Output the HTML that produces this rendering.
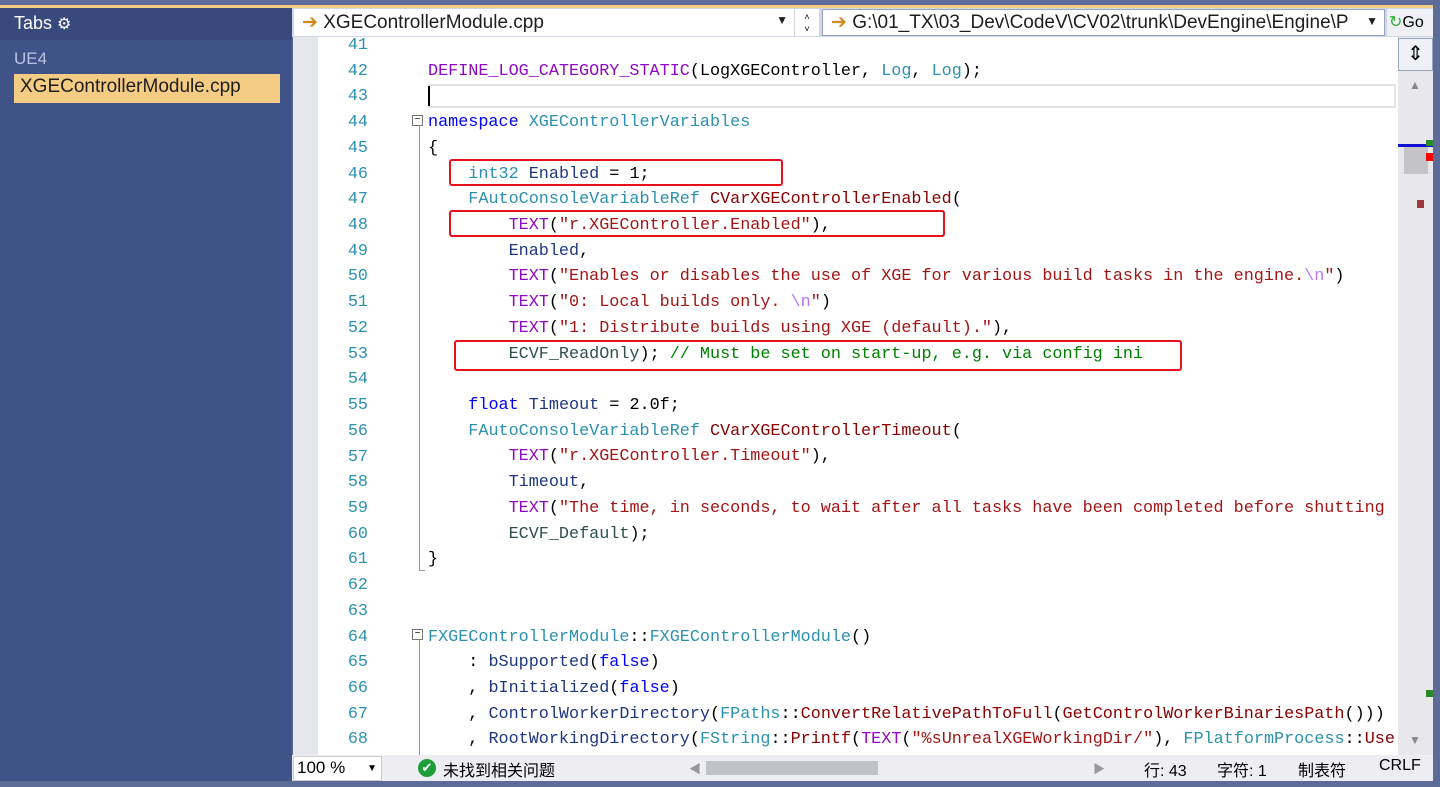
<!DOCTYPE html>
<html><head><meta charset="utf-8"><style>
*{margin:0;padding:0;box-sizing:border-box}
body{width:1440px;height:787px;overflow:hidden;background:#5d6b99;position:relative;font-family:"Liberation Sans","Noto Sans CJK SC",sans-serif}
.abs{position:absolute}
#side{left:0;top:8px;width:292px;height:773px;background:#3f5389}
#sidehead{left:0;top:8px;width:292px;height:32px;background:#384a7d;color:#fff;font-size:18px;padding:5px 14px}
#code{left:293px;top:37px;width:1105px;height:718px;background:#fff;overflow:hidden}
#gutter{left:0;top:0;width:25px;height:718px;background:#e6e7ed}
pre{position:absolute;left:0;top:-4px;font-family:"Liberation Mono",monospace;font-size:16.8px;line-height:25.72px;color:#000;white-space:pre}
.ln{color:#2b91af;text-align:right;width:75px}
.m{color:#8f08c4}.s{color:#a31515}.t{color:#2b91af}.v{color:#1f377f}.k{color:#0000ff}.g{color:#880000}.e{color:#2f4f4f}.c{color:#008000}.esc{color:#b776fb}
.box{position:absolute;border:2px solid #e8101a;border-radius:3px}
</style></head><body>
<div class="abs" style="left:0;top:0;width:1440px;height:5px;background:#5d6b99"></div>
<div class="abs" style="left:0;top:5px;width:1433px;height:3px;background:#f5cc84"></div>
<div class="abs" id="side"></div>
<div class="abs" id="sidehead">Tabs <span style="font-size:16px">⚙</span></div>
<div class="abs" style="left:14px;top:49px;color:#b8c3e0;font-size:17px">UE4</div>
<div class="abs" style="left:14px;top:74px;width:266px;height:29px;background:#f5cc84;color:#1e1e1e;font-size:19px;padding:2px 6px">XGEControllerModule.cpp</div>
<div class="abs" style="left:292px;top:8px;width:1141px;height:29px;background:#cfd6e5"></div>
<div class="abs" style="left:294px;top:9px;width:500px;height:27px;background:#fff;font-size:19px;padding:2px 8px;color:#1e1e1e"><span style="color:#d08a20">➔</span> XGEControllerModule.cpp<span style="position:absolute;right:6px;top:4px;font-size:12px">▼</span></div>
<div class="abs" style="left:795px;top:9px;width:24px;height:27px;background:#fff;font-size:9px;text-align:center;line-height:12px;padding-top:2px">˄<br>˅</div>
<div class="abs" style="left:822px;top:9px;width:563px;height:27px;background:#fff;border:1px solid #9aa4c0;font-size:19px;padding:1px 8px;color:#1e1e1e;white-space:nowrap;overflow:hidden"><span style="color:#d08a20">➔</span> G:\01_TX\03_Dev\CodeV\CV02\trunk\DevEngine\Engine\P<span style="position:absolute;right:6px;top:4px;font-size:12px">▼</span></div>
<div class="abs" style="left:1387px;top:9px;width:46px;height:27px;background:#eef0f6;font-size:16px;padding:3px 2px"><span style="color:#3a3">↻</span>Go</div>
<div class="abs" id="code">
<div class="abs" id="gutter"></div>
<div class="abs" style="left:135px;top:47px;width:968px;height:24px;border:2px solid #e4e4e4"></div>
<div class="abs" style="left:135px;top:49px;width:2px;height:20px;background:#000"></div>
<pre class="ln" style="left:0">41
42
43
44
45
46
47
48
49
50
51
52
53
54
55
56
57
58
59
60
61
62
63
64
65
66
67
68</pre>
<div class="abs" style="left:119px;top:78px;width:11px;height:11px;border:1px solid #777;font-size:10px;line-height:8px;text-align:center">−</div>
<div class="abs" style="left:126px;top:89px;width:1px;height:445px;background:#999"></div>
<div class="abs" style="left:126px;top:533px;width:6px;height:1px;background:#999"></div>
<div class="abs" style="left:119px;top:592px;width:11px;height:11px;border:1px solid #777;font-size:10px;line-height:8px;text-align:center">−</div>
<div class="abs" style="left:126px;top:603px;width:1px;height:120px;background:#999"></div>
<pre style="left:135px;top:21.7px"><span class="m">DEFINE_LOG_CATEGORY_STATIC</span>(LogXGEController, <span class="t">Log</span>, <span class="t">Log</span>);

<span class="k">namespace</span> <span class="t">XGEControllerVariables</span>
{
    <span class="t">int32</span> <span class="v">Enabled</span> = 1;
    <span class="t">FAutoConsoleVariableRef</span> <span class="g">CVarXGEControllerEnabled</span>(
        <span class="m">TEXT</span>(<span class="s">"r.XGEController.Enabled"</span>),
        <span class="v">Enabled</span>,
        <span class="m">TEXT</span>(<span class="s">"Enables or disables the use of XGE for various build tasks in the engine.</span><span class="esc">\n</span><span class="s">"</span>)
        <span class="m">TEXT</span>(<span class="s">"0: Local builds only. </span><span class="esc">\n</span><span class="s">"</span>)
        <span class="m">TEXT</span>(<span class="s">"1: Distribute builds using XGE (default)."</span>),
        <span class="e">ECVF_ReadOnly</span>); <span class="c">// Must be set on start-up, e.g. via config ini</span>

    <span class="k">float</span> <span class="v">Timeout</span> = 2.0f;
    <span class="t">FAutoConsoleVariableRef</span> <span class="g">CVarXGEControllerTimeout</span>(
        <span class="m">TEXT</span>(<span class="s">"r.XGEController.Timeout"</span>),
        <span class="v">Timeout</span>,
        <span class="m">TEXT</span>(<span class="s">"The time, in seconds, to wait after all tasks have been completed before shutting</span>
        <span class="e">ECVF_Default</span>);
}


<span class="t">FXGEControllerModule</span>::<span class="t">FXGEControllerModule</span>()
    : <span class="v">bSupported</span>(<span class="k">false</span>)
    , <span class="v">bInitialized</span>(<span class="k">false</span>)
    , <span class="v">ControlWorkerDirectory</span>(<span class="t">FPaths</span>::<span class="g">ConvertRelativePathToFull</span>(<span class="g">GetControlWorkerBinariesPath</span>()))
    , <span class="v">RootWorkingDirectory</span>(<span class="t">FString</span>::<span class="g">Printf</span>(<span class="m">TEXT</span>(<span class="s">"%sUnrealXGEWorkingDir/"</span>), <span class="t">FPlatformProcess</span>::<span class="g">Use</span></pre>
</div>
<div class="box" style="left:449px;top:159px;width:334px;height:27px"></div>
<div class="box" style="left:449px;top:210px;width:496px;height:27px"></div>
<div class="box" style="left:454px;top:340px;width:728px;height:31px"></div>
<div class="abs" style="left:1398px;top:37px;width:35px;height:718px;background:#e8e8ec"></div>
<div class="abs" style="left:1398px;top:38px;width:35px;height:33px;background:#eef0f8;border:1px solid #9aa4c0;text-align:center;font-size:20px;line-height:30px">⇕</div>
<div class="abs" style="left:1409px;top:78px;color:#888;font-size:12px">▲</div>
<div class="abs" style="left:1409px;top:733px;color:#888;font-size:12px">▼</div>
<div class="abs" style="left:1404px;top:146px;width:24px;height:28px;background:#c4c4c8"></div>
<div class="abs" style="left:1398px;top:144px;width:35px;height:3px;background:#1010d0"></div>
<div class="abs" style="left:1426px;top:140px;width:7px;height:6px;background:#2a8a2a"></div>
<div class="abs" style="left:1426px;top:153px;width:7px;height:8px;background:#f00"></div>
<div class="abs" style="left:1417px;top:200px;width:7px;height:8px;background:#9b3a40"></div>
<div class="abs" style="left:1426px;top:690px;width:7px;height:7px;background:#2a8a2a"></div>
<div class="abs" style="left:1433px;top:0;width:7px;height:787px;background:#5d6b99"></div>
<div class="abs" style="left:292px;top:755px;width:1141px;height:26px;background:#eeeef2"></div>
<div class="abs" style="left:293px;top:756px;width:89px;height:25px;background:#fff;border:1px solid #ccc;font-size:17px;padding:1px 3px">100 %<span style="position:absolute;right:4px;top:6px;font-size:10px">▼</span></div>
<div class="abs" style="left:418px;top:759px;width:18px;height:18px;border-radius:50%;background:#1f9d3a;color:#fff;font-size:13px;text-align:center;line-height:18px">✔</div>
<div class="abs" style="left:443px;top:757px;font-size:16px">未找到相关问题</div>
<div class="abs" style="left:689px;top:760px;color:#999;font-size:12px">◀</div>
<div class="abs" style="left:706px;top:761px;width:172px;height:14px;background:#c2c3c9"></div>
<div class="abs" style="left:1093px;top:760px;color:#999;font-size:12px">▶</div>
<div class="abs" style="left:1144px;top:757px;font-size:16px">行: 43</div>
<div class="abs" style="left:1217px;top:757px;font-size:16px">字符: 1</div>
<div class="abs" style="left:1298px;top:757px;font-size:16px">制表符</div>
<div class="abs" style="left:1379px;top:757px;font-size:16px">CRLF</div>
</body></html>
